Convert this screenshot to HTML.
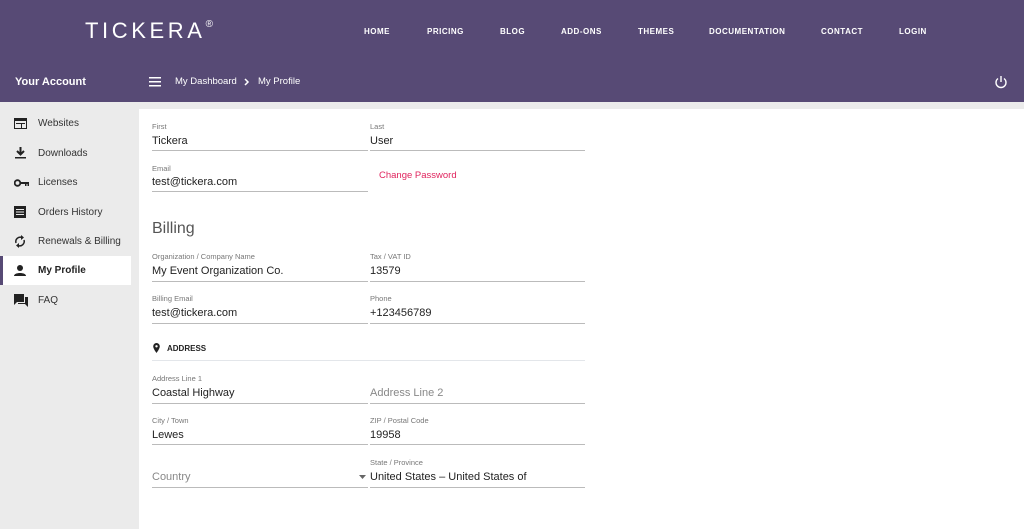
<!DOCTYPE html>
<html><head><meta charset="utf-8"><style>
*{margin:0;padding:0;box-sizing:border-box}
body{width:1024px;height:529px;overflow:hidden;background:#fff;font-family:"Liberation Sans",sans-serif;position:relative;color:#222}
.hdr{position:absolute;left:0;top:0;width:1024px;height:102px;background:#574a75}
.logo{position:absolute;left:85px;top:18px;color:#fff;font-size:22px;letter-spacing:3.6px;font-weight:normal}
.logo sup{font-size:10px;letter-spacing:0;position:relative;top:-3px}
.nav{position:absolute;top:27px;color:#fff;font-size:8px;font-weight:bold;letter-spacing:.5px}
.ya{position:absolute;left:15px;top:76px;color:#fff;font-size:11px;font-weight:bold}
.bc{position:absolute;top:76px;color:#fff;font-size:9.5px}
.strip{position:absolute;left:0;top:102px;width:1024px;height:7px;background:#ebebeb}
.side{position:absolute;left:0;top:102px;width:139px;height:427px;background:#ebebeb}
.si{position:absolute;left:38px;font-size:10px;color:#333}
.ic{position:absolute;left:14px}
.act{position:absolute;left:0;top:256px;width:131px;height:29px;background:#fff;border-left:3px solid #574a75}
.lb{position:absolute;font-size:7.5px;color:#777}
.v{position:absolute;font-size:11px;color:#222}
.ph{color:#888}
.ln{position:absolute;height:1px;background:#bbb}
</style></head><body>
<div class="hdr"></div>
<div class="logo">TICKERA<sup>®</sup></div>
<div class="nav" style="left:364px">HOME</div>
<div class="nav" style="left:427px">PRICING</div>
<div class="nav" style="left:500px">BLOG</div>
<div class="nav" style="left:561px">ADD-ONS</div>
<div class="nav" style="left:638px">THEMES</div>
<div class="nav" style="left:709px">DOCUMENTATION</div>
<div class="nav" style="left:821px">CONTACT</div>
<div class="nav" style="left:899px">LOGIN</div>
<div class="ya">Your Account</div>
<svg style="position:absolute;left:149px;top:77px" width="13" height="10"><rect y="0" width="12" height="1.5" fill="#fff"/><rect y="4" width="12" height="1.5" fill="#fff"/><rect y="8" width="12" height="1.5" fill="#fff"/></svg>
<div class="bc" style="left:175px">My Dashboard</div>
<svg style="position:absolute;left:244px;top:78px" width="6" height="8"><path d="M1 1l3 3-3 3" stroke="#fff" stroke-width="1.5" fill="none"/></svg>
<div class="bc" style="left:258px">My Profile</div>
<svg style="position:absolute;left:994px;top:75px" width="14" height="14" viewBox="0 0 14 14"><path d="M4 3.5A5 5 0 1 0 10 3.5" stroke="#fff" stroke-width="1.4" fill="none"/><path d="M7 1v6" stroke="#fff" stroke-width="1.4"/></svg>
<div class="strip"></div>
<div class="side"></div>
<div class="act"></div>
<svg class="ic" style="top:118px" width="13" height="11"><rect x=".5" y=".5" width="12" height="10" fill="none" stroke="#222"/><rect x="0" y="0" width="13" height="3" fill="#222"/><rect x="2" y="5" width="9" height="1" fill="#222"/><rect x="7" y="5" width="1" height="5" fill="#222"/></svg>
<div class="si" style="top:118px">Websites</div>
<svg class="ic" style="top:147px" width="13" height="12"><path d="M6.5 0v7M3 4l3.5 3.5L10 4" stroke="#222" stroke-width="2" fill="none"/><rect x="1" y="10" width="11" height="1.5" fill="#222"/></svg>
<div class="si" style="top:148px">Downloads</div>
<svg class="ic" style="top:179px" width="16" height="8"><circle cx="3.5" cy="4" r="2.8" fill="none" stroke="#222" stroke-width="1.8"/><rect x="6" y="3" width="9" height="2" fill="#222"/><rect x="11" y="3" width="1.5" height="4" fill="#222"/><rect x="13.5" y="3" width="1.5" height="4" fill="#222"/></svg>
<div class="si" style="top:177px">Licenses</div>
<svg class="ic" style="top:206px" width="12" height="12"><rect width="12" height="12" fill="#222"/><rect x="2" y="3" width="8" height="1" fill="#ebebeb"/><rect x="2" y="5.5" width="8" height="1" fill="#ebebeb"/><rect x="2" y="8" width="8" height="1" fill="#ebebeb"/></svg>
<div class="si" style="top:207px">Orders History</div>
<svg class="ic" style="top:235px" width="12" height="13"><path d="M2 8A4.5 4.5 0 0 1 8 2.5M10 5A4.5 4.5 0 0 1 4 10.5" stroke="#222" stroke-width="1.5" fill="none"/><path d="M7 0l3 2.5-3 2.5zM5 8l-3 2.5 3 2.5z" fill="#222"/></svg>
<div class="si" style="top:236px">Renewals &amp; Billing</div>
<svg class="ic" style="top:265px" width="12" height="11"><circle cx="6" cy="3" r="3" fill="#222"/><path d="M0 11c0-4 12-4 12 0z" fill="#222"/></svg>
<div class="si" style="top:265px;font-weight:bold;color:#222">My Profile</div>
<svg class="ic" style="top:294px" width="14" height="13"><path d="M0 0h10v8H3l-3 3z" fill="#222"/><path d="M11 3h3v10l-3-3H4V9h7z" fill="#222"/></svg>
<div class="si" style="top:295px">FAQ</div>

<div class="lb" style="left:152px;top:122px">First</div><div class="v" style="left:152px;top:135px">Tickera</div><div class="ln" style="left:152px;top:150px;width:216px"></div>
<div class="lb" style="left:370px;top:122px">Last</div><div class="v" style="left:370px;top:135px">User</div><div class="ln" style="left:370px;top:150px;width:215px"></div>
<div class="lb" style="left:152px;top:164px">Email</div><div class="v" style="left:152px;top:176px">test@tickera.com</div><div class="ln" style="left:152px;top:191px;width:216px"></div>
<div style="position:absolute;left:379px;top:170px;font-size:9.5px;color:#e0245e">Change Password</div>
<div style="position:absolute;left:152px;top:220px;font-size:16px;color:#555">Billing</div>
<div class="lb" style="left:152px;top:252px">Organization / Company Name</div><div class="v" style="left:152px;top:265px">My Event Organization Co.</div><div class="ln" style="left:152px;top:281px;width:216px"></div>
<div class="lb" style="left:370px;top:252px">Tax / VAT ID</div><div class="v" style="left:370px;top:265px">13579</div><div class="ln" style="left:370px;top:281px;width:215px"></div>
<div class="lb" style="left:152px;top:294px">Billing Email</div><div class="v" style="left:152px;top:307px">test@tickera.com</div><div class="ln" style="left:152px;top:323px;width:216px"></div>
<div class="lb" style="left:370px;top:294px">Phone</div><div class="v" style="left:370px;top:307px">+123456789</div><div class="ln" style="left:370px;top:323px;width:215px"></div>
<svg style="position:absolute;left:153px;top:343px" width="7" height="10"><path d="M3.5 0A3.3 3.3 0 0 0 .2 3.3C.2 6 3.5 10 3.5 10S6.8 6 6.8 3.3A3.3 3.3 0 0 0 3.5 0z" fill="#222"/><circle cx="3.5" cy="3.3" r="1.2" fill="#fff"/></svg>
<div style="position:absolute;left:167px;top:344px;font-size:8px;font-weight:bold;color:#222">ADDRESS</div>
<div class="ln" style="left:152px;top:360px;width:433px;background:#e3e6ea"></div>
<div class="lb" style="left:152px;top:374px">Address Line 1</div><div class="v" style="left:152px;top:387px">Coastal Highway</div><div class="ln" style="left:152px;top:403px;width:216px"></div>
<div class="v ph" style="left:370px;top:387px">Address Line 2</div><div class="ln" style="left:370px;top:403px;width:215px"></div>
<div class="lb" style="left:152px;top:416px">City / Town</div><div class="v" style="left:152px;top:429px">Lewes</div><div class="ln" style="left:152px;top:444px;width:216px"></div>
<div class="lb" style="left:370px;top:416px">ZIP / Postal Code</div><div class="v" style="left:370px;top:429px">19958</div><div class="ln" style="left:370px;top:444px;width:215px"></div>
<div class="v ph" style="left:152px;top:471px">Country</div>
<svg style="position:absolute;left:359px;top:475px" width="7" height="4"><path d="M0 0h7L3.5 4z" fill="#666"/></svg>
<div class="ln" style="left:152px;top:487px;width:216px"></div>
<div class="lb" style="left:370px;top:458px">State / Province</div><div class="v" style="left:370px;top:471px">United States – United States of</div><div class="ln" style="left:370px;top:487px;width:215px"></div>
</body></html>
